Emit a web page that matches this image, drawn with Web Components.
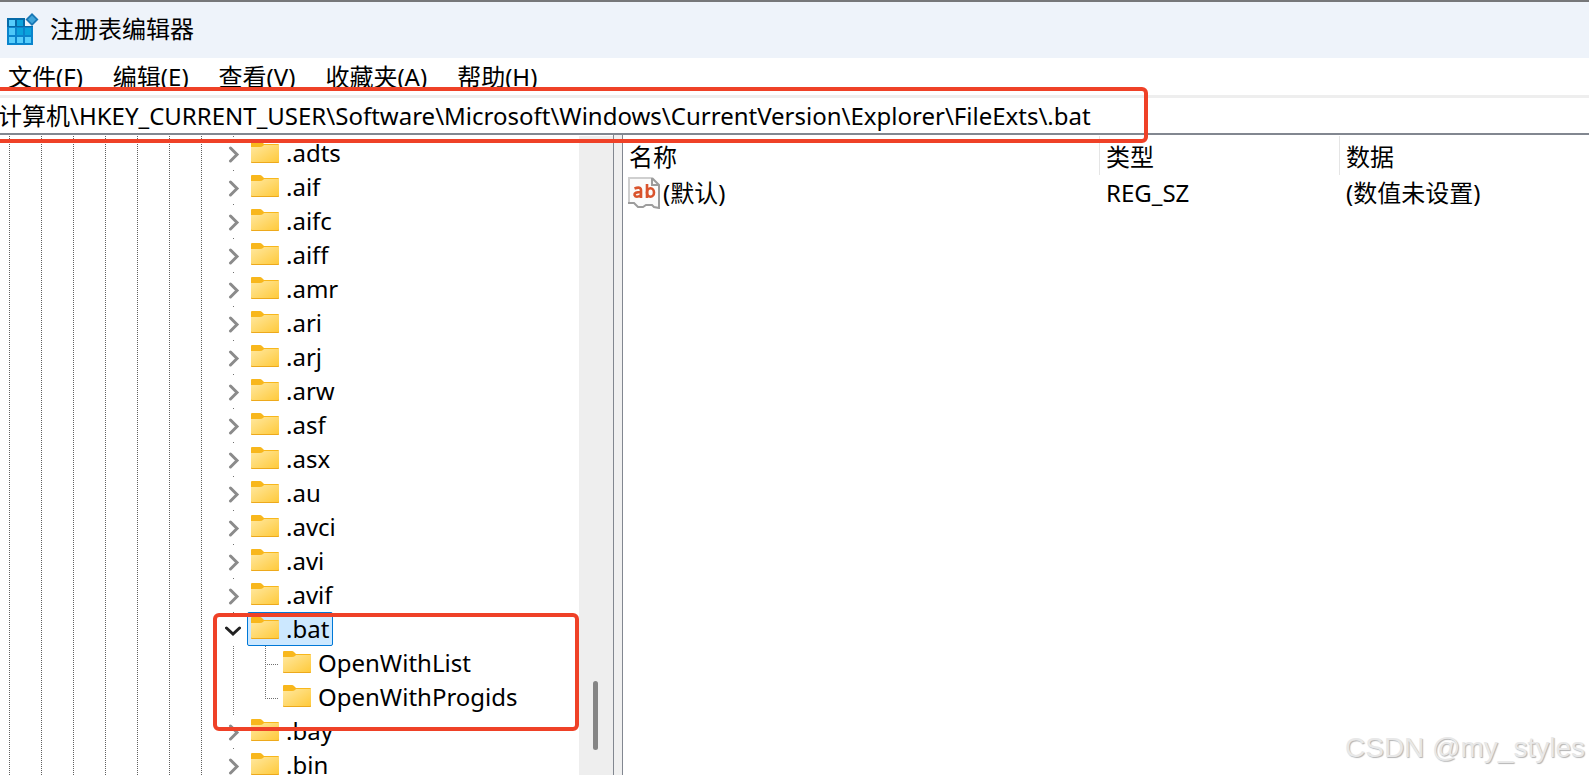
<!DOCTYPE html>
<html lang="zh-CN">
<head>
<meta charset="utf-8">
<title>注册表编辑器</title>
<style>
  html, body { margin: 0; height: 100%; }
  body { overflow: hidden; background: #fff; color: #000; font: 24px/34px "Noto Sans", "Noto Sans CJK SC", sans-serif; }
</style>
</head>
<body>
<reg-window>
  <reg-titlebar slot="title">注册表编辑器</reg-titlebar>
  <reg-menubar slot="menu" items="文件(F)|编辑(E)|查看(V)|收藏夹(A)|帮助(H)"></reg-menubar>
  <reg-address slot="address" path="计算机\HKEY_CURRENT_USER\Software\Microsoft\Windows\CurrentVersion\Explorer\FileExts\.bat"></reg-address>
  <reg-tree slot="tree">
    <reg-key>.adts</reg-key>
    <reg-key>.aif</reg-key>
    <reg-key>.aifc</reg-key>
    <reg-key>.aiff</reg-key>
    <reg-key>.amr</reg-key>
    <reg-key>.ari</reg-key>
    <reg-key>.arj</reg-key>
    <reg-key>.arw</reg-key>
    <reg-key>.asf</reg-key>
    <reg-key>.asx</reg-key>
    <reg-key>.au</reg-key>
    <reg-key>.avci</reg-key>
    <reg-key>.avi</reg-key>
    <reg-key>.avif</reg-key>
    <reg-key open selected>.bat</reg-key>
    <reg-key child>OpenWithList</reg-key>
    <reg-key child last>OpenWithProgids</reg-key>
    <reg-key>.bay</reg-key>
    <reg-key>.bin</reg-key>
  </reg-tree>
  <reg-values slot="values"></reg-values>
</reg-window>
<script>
const define = (name, html, setup) => customElements.define(name, class extends HTMLElement {
  constructor() {
    super();
    this.attachShadow({ mode: 'open' }).innerHTML = html;
  }
  connectedCallback() { if (setup) setup(this, this.shadowRoot); }
});

define('reg-window', `
<style>
  :host { display: flex; flex-direction: column; height: 100vh; position: relative; overflow: hidden; }
  .panes { flex: 1; min-height: 0; display: grid; grid-template: minmax(0, 1fr) / 613px 10px 1fr; }
  .split { background: #f0f0f0; border: solid #828790; border-width: 0 1px; }
  .mark { position: absolute; box-sizing: border-box; border: 4px solid #ef4127; border-radius: 6px; pointer-events: none; }
  .path { left: -8px; top: 87px; width: 1156px; height: 56px; }
  .keys { left: 213px; top: 613px; width: 366px; height: 118px; }
  .water { position: absolute; right: 4px; bottom: 10px; color: #e8e8e8; text-shadow: 1px 1px 1px #b4b4b4; font: 28px/34px "Liberation Sans", sans-serif; }
</style>
<slot name="title"></slot>
<slot name="menu"></slot>
<slot name="address"></slot>
<div class="panes"><slot name="tree"></slot><div class="split"></div><slot name="values"></slot></div>
<div class="mark path"></div>
<div class="mark keys"></div>
<div class="water">CSDN @my_styles</div>`);

define('reg-titlebar', `
<style>
  :host { display: flex; align-items: flex-start; gap: 11px; box-sizing: border-box; height: 58px; padding: 10px 0 0 7px; border-top: 2px solid #767779; background: #eef3fa; }
  svg { flex: none; margin-top: 1px; }
</style>
<svg width="32" height="33" viewBox="0 0 32 33" aria-hidden="true">
  <path d="M0 5h18v8h8v19H0z" fill="#0a84cc"/>
  <path d="M0 5h18v8h8v1H0z" fill="#066aa8"/>
  <path d="M2 7h6v6H2z" fill="#56cdfb"/><path d="M10 7h6v6h-6z" fill="#0aa3dd"/>
  <path d="M2 15h6v7H2z" fill="#4cc8f8"/><path d="M10 15h6v7h-6zM18 15h6v7h-6z" fill="#0aa3dd"/>
  <path d="M2 24h6v6H2zM10 24h6v6h-6zM18 24h6v6h-6z" fill="#56cdfb"/>
  <path d="M25 0l6.500 6.500L25 13l-6.500-6.500z" fill="#1877b4"/>
  <path d="M25 2.500l4 4-4 4-4-4z" fill="#41a5da"/>
</svg>
<span><slot></slot></span>`);

define('reg-menubar', `
<style>
  :host { display: flex; gap: 30px; box-sizing: border-box; height: 37px; padding-left: 8px; background: #fff; }
  button { all: unset; line-height: 37px; white-space: nowrap; }
</style>`, (el, root) => {
  for (const item of el.getAttribute('items').split('|')) {
    const b = document.createElement('button');
    b.textContent = item;
    root.append(b);
  }
});

define('reg-address', `
<style>
  :host { display: block; box-sizing: border-box; height: 40px; border-top: 3px solid #eee; border-bottom: 2px solid #828790; }
  input { display: block; box-sizing: border-box; width: 100%; height: 35px; margin: 0; padding: 0 0 2px; border: 0; outline: 0; background: #fff; color: inherit; font: inherit; text-indent: -2px; }
</style>
<input type="text" aria-label="地址" spellcheck="false">`, (el, root) => {
  root.querySelector('input').value = el.getAttribute('path');
});

define('reg-tree', `
<style>
  :host { display: grid; grid-template: minmax(0, 1fr) / 1fr 34px; min-height: 0; overflow: hidden; }
  .keys { padding-top: 1px; min-width: 0; }
  .bar { position: relative; background: #eee; margin-top: 1px; }
  .thumb { position: absolute; left: 14px; bottom: 25px; width: 5px; height: 69px; border-radius: 3px; background: #858585; }
</style>
<div class="keys" role="tree"><slot></slot></div>
<div class="bar"><div class="thumb"></div></div>`);

define('reg-key', `
<style>
  :host { display: flex; height: 34px; padding-left: 9px; --v: repeating-linear-gradient(180deg, #707070 0 1px, transparent 1px 2px); --h: repeating-linear-gradient(90deg, #707070 0 1px, transparent 1px 2px); }
  .guides { flex: none; width: 224px; background: repeating-linear-gradient(180deg, transparent 0 1px, #fff 1px 2px), repeating-linear-gradient(90deg, #606060 0 1px, transparent 1px 32px); }
  .twist { all: unset; flex: none; width: 14px; height: 34px; background: linear-gradient(#707070, #707070) 0 0 / 1px 1px no-repeat; }
  .twist svg { display: block; margin: 3px 0 0 -8px; }
  .twist .down, :host([open]) .twist .right { display: none; }
  :host([open]) .twist .down { display: block; }
  .line { display: none; flex: none; width: 32px; background: var(--v) 0 0 / 1px 100% no-repeat; }
  .branch { display: none; flex: none; width: 14px; background: var(--v) 0 0 / 1px 100% no-repeat, var(--h) 0 18px / 15px 1px no-repeat; }
  :host([last]) .branch { background: var(--v) 0 0 / 1px 18px no-repeat, var(--h) 0 18px / 15px 1px no-repeat; }
  :host([child]) .line, :host([child]) .branch { display: block; }
  :host([child]) .twist { display: none; }
  .key { display: flex; box-sizing: border-box; border: 1px solid transparent; border-radius: 2px; padding: 0 3px; gap: 7px; line-height: 32px; white-space: nowrap; }
  .key svg { flex: none; margin-top: 4px; }
  :host([selected]) .key { background: #cce8ff; border-color: #0078d7; }
</style>
<div class="guides"></div>
<button class="twist" aria-label="展开">
  <svg class="right" width="16" height="17" viewBox="0 0 16 17" fill="none" stroke="#8b8b8b" stroke-width="3" stroke-linecap="round"><path d="M5.500 2L12 8.500L5.500 15"/></svg>
  <svg class="down" width="16" height="17" viewBox="0 0 16 17" fill="none" stroke="#222" stroke-width="3" stroke-linecap="round"><path d="M1.500 6L8 12L14.500 6"/></svg>
</button>
<div class="line"></div><div class="branch"></div>
<div class="key" role="treeitem">
  <svg width="28" height="22" viewBox="0 0 28 22" aria-hidden="true">
    <defs><linearGradient id="g" x1="0" y1="0" x2="1" y2="1"><stop offset="0" stop-color="#ffe8a0"/><stop offset="1" stop-color="#ffc938"/></linearGradient></defs>
    <path d="M0 1Q0 0 1 0H9Q10 0 11 1L13 3H27Q28 3 28 4V10H0z" fill="#f8b71c"/>
    <path d="M0 6H9Q11 6 12 5L13 4H28V21Q28 22 27 22H1Q0 22 0 21z" fill="url(#g)"/>
    <path d="M0 20.500Q0 22 1 22H27Q28 22 28 20.500L27 21H1z" fill="#eda91c"/>
  </svg>
  <span><slot></slot></span>
</div>`);

define('reg-values', `
<style>
  :host { display: block; min-width: 0; padding-top: 1px; }
  table { width: 100%; table-layout: fixed; border-collapse: separate; border-spacing: 0; }
  th, td { text-align: left; font-weight: 400; white-space: nowrap; padding: 2px 0 0 6px; box-sizing: border-box; line-height: 34px; }
  th { height: 39px; border-left: 1px solid #e5e5e5; }
  td { height: 36px; padding-top: 0; border-left: 1px solid transparent; }
  th:first-child, td:first-child { border-left: 0; }
  td:first-child { padding-left: 5px; }
  .name { display: flex; gap: 3px; align-items: center; }
  svg { flex: none; }
</style>
<table>
  <colgroup><col style="width:476px"><col style="width:240px"><col></colgroup>
  <thead><tr><th>名称</th><th>类型</th><th>数据</th></tr></thead>
  <tbody><tr>
    <td><span class="name"><svg width="32" height="32" viewBox="0 0 32 32" aria-hidden="true">
      <path d="M1 1H24L31 8V31L26 30L24 28L18 28L15 30H10L6 26H1z" fill="#fbfbfb"/>
      <path d="M1 26V1H24" fill="none" stroke="#cfcfcf" stroke-width="2"/>
      <path d="M24 1L31 8V31L26 30L24 28H18L15 30H10L6 26H0M24 1V8H31" fill="none" stroke="#9c9c9c" stroke-width="2"/>
      <g fill="none" stroke="#d9532c" stroke-width="2.600"><path d="M6.500 11.500Q13 9 13 13.500V21M13 15Q6 15 6.500 18Q8 21.500 13 18M19 7V21"/><ellipse cx="22.500" cy="15.500" rx="3.500" ry="4.200"/></g>
    </svg>(默认)</span></td><td>REG_SZ</td><td>(数值未设置)</td>
  </tr></tbody>
</table>`);
</script>
</body>
</html>
